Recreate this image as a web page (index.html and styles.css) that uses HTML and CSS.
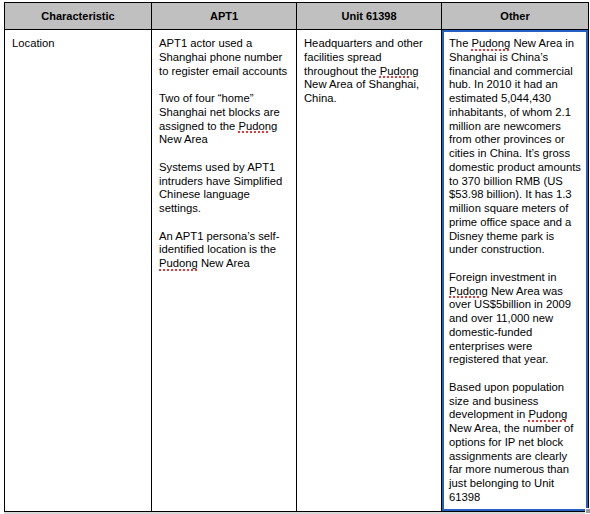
FILE: index.html
```html
<!DOCTYPE html>
<html>
<head>
<meta charset="utf-8">
<link rel="stylesheet" href="styles.css">
</head>
<body>
<table class="grid">
  <colgroup>
    <col class="c1"><col class="c2"><col class="c3"><col class="c4">
  </colgroup>
  <thead>
    <tr>
      <th>Characteristic</th>
      <th>APT1</th>
      <th>Unit 61398</th>
      <th>Other</th>
    </tr>
  </thead>
  <tbody>
    <tr>
      <td><p>Location</p></td>
      <td>
        <p>APT1 actor used a Shanghai phone number to register email accounts</p>
        <p>Two of four “home” Shanghai net blocks are assigned to the <span class="spell">Pudong</span> New Area</p>
        <p>Systems used by APT1 intruders have Simplified Chinese language settings.</p>
        <p>An APT1 persona’s self-identified location is the <span class="spell">Pudong</span> New Area</p>
      </td>
      <td>
        <p>Headquarters and other facilities spread throughout the <span class="spell">Pudong</span> New Area of Shanghai, China.</p>
      </td>
      <td class="selected">
        <p>The <span class="spell">Pudong</span> New Area in Shanghai is China’s financial and commercial hub. In 2010 it had an estimated 5,044,430 inhabitants, of whom 2.1 million are newcomers from other provinces or cities in China. It’s gross domestic product amounts to 370 billion RMB (US $53.98 billion). It has 1.3 million square meters of prime office space and a Disney theme park is under construction.</p>
        <p>Foreign investment in <span class="spell">Pudong</span> New Area was over US$5billion in 2009 and over 11,000 new domestic-funded enterprises were registered that year.</p>
        <p>Based upon population size and business development in <span class="spell">Pudong</span> New Area, the number of options for IP net block assignments are clearly far more numerous than just belonging to Unit 61398</p>
        <span class="handle"></span>
      </td>
    </tr>
  </tbody>
</table>
<div class="shadow"></div>
</body>
</html>
```
FILE: styles.css
```css
html, body {
  margin: 0;
  padding: 0;
  background: #ffffff;
}
body {
  padding: 2px 0 0 4px;
  font-family: "Liberation Sans", Arial, Helvetica, sans-serif;
  color: #000;
}
.grid {
  border-collapse: collapse;
  table-layout: fixed;
  width: 584px;
}
.c1 { width: 147px; }
.c2 { width: 145px; }
.c3 { width: 145px; }
.c4 { width: 147px; }
.grid th,
.grid td {
  border: 1px solid #000;
}
.grid th {
  background: #c0c0c0;
  height: 26px;
  padding: 0;
  font-size: 11px;
  font-weight: bold;
  text-align: center;
  vertical-align: middle;
}
.grid td {
  height: 467px;
  padding: 7px 5px 6px 7px;
  vertical-align: top;
  font-size: 11.25px;
  line-height: 13.75px;
}
.grid td p {
  margin: 0 0 13.75px 0;
}
.grid td p:last-of-type {
  margin-bottom: 0;
}
.spell {
  text-decoration: underline dotted #e03a3a;
  text-decoration-thickness: 2px;
  text-underline-offset: 2px;
}
.selected {
  position: relative;
  box-shadow: inset 0 0 0 2px #2460c4;
}
.handle {
  position: absolute;
  right: -3px;
  bottom: -3px;
  width: 4px;
  height: 4px;
  background: #9a9a9a;
  border: 1px solid #fff;
}
.shadow {
  width: 586px;
  height: 2px;
  background: #d8d8d8;
}
```
